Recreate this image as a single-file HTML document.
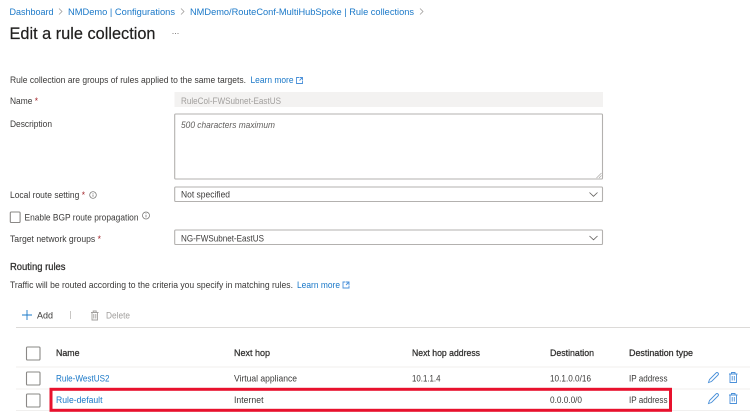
<!DOCTYPE html>
<html lang="en"><head><meta charset="utf-8"><title>Edit a rule collection</title>
<style>
html,body{margin:0;padding:0;background:#fff;width:750px;height:418px;overflow:hidden}
svg{display:block;filter:blur(.35px)}
text{font-family:"Liberation Sans",sans-serif;font-size:9.6px;fill:#3b3a39;white-space:pre}
.l{fill:#1a78c8}
.b{fill:#323130;stroke:#323130;stroke-width:.28}
.box{fill:#fff;stroke:#8a8886;stroke-width:1.1}
.sel{fill:#fff;stroke:#b3b1af;stroke-width:1.1}
.ln{stroke:#f0efee;stroke-width:1}
.ic{fill:none;stroke:#4a90d9;stroke-width:.9}
.gr{fill:none;stroke:#6b6a68;stroke-width:.7}
</style></head><body>
<svg width="750" height="418" viewBox="0 0 750 418" xmlns="http://www.w3.org/2000/svg">
<rect width="750" height="418" fill="#fff"/>

<text class="l" x="9.5" y="14.8" textLength="44" lengthAdjust="spacingAndGlyphs">Dashboard</text>
<path d="M59 8.500l3 3-3 3" fill="none" stroke="#a19f9d" stroke-width=".8"/>
<text class="l" x="68" y="14.8" textLength="107" lengthAdjust="spacingAndGlyphs">NMDemo | Configurations</text>
<path d="M181 8.500l3 3-3 3" fill="none" stroke="#a19f9d" stroke-width=".8"/>
<text class="l" x="190" y="14.800" textLength="224" lengthAdjust="spacingAndGlyphs">NMDemo/RouteConf-MultiHubSpoke | Rule collections</text>
<path d="M420 8.500l3 3-3 3" fill="none" stroke="#a19f9d" stroke-width=".8"/>

<text x="9.500" y="39" textLength="146" lengthAdjust="spacingAndGlyphs" style="font-size:17px;fill:#201f1e;stroke:#201f1e;stroke-width:.2">Edit a rule collection</text>
<circle cx="173" cy="33.500" r=".5" fill="#605e5c"/><circle cx="175.500" cy="33.500" r=".5" fill="#605e5c"/><circle cx="178" cy="33.500" r=".5" fill="#605e5c"/>

<text x="10" y="83" textLength="236" lengthAdjust="spacingAndGlyphs">Rule collection are groups of rules applied to the same targets.</text>
<text class="l" x="250.500" y="83" textLength="43" lengthAdjust="spacingAndGlyphs">Learn more</text>
<path d="M299 77.500h-2.500v6h6V81M299.500 77.500h3v3M302.500 77.500l-3 3" class="ic" stroke-width=".7"/>

<text x="10" y="104" textLength="28" lengthAdjust="spacingAndGlyphs">Name <tspan fill="#a4262c">*</tspan></text>
<rect x="174.500" y="92" width="428.500" height="15" fill="#f3f2f1"/>
<text x="181" y="104" textLength="100" lengthAdjust="spacingAndGlyphs" style="fill:#a19f9d">RuleCol-FWSubnet-EastUS</text>

<text x="10" y="127" textLength="42" lengthAdjust="spacingAndGlyphs">Description</text>
<rect class="sel" x="174.700" y="114" width="427.800" height="65" rx="1"/>
<text x="181" y="128" textLength="94" lengthAdjust="spacingAndGlyphs" style="font-style:italic;fill:#605e5c">500 characters maximum</text>
<path d="M596.500 178l5-5M599 178l2.500-2.500" stroke="#a8a6a4" stroke-width=".7"/>

<text x="10" y="198" textLength="75" lengthAdjust="spacingAndGlyphs">Local route setting <tspan fill="#a4262c">*</tspan></text>
<circle cx="93" cy="195" r="3.300" class="gr"/><path d="M93 194.500v2.300M93 193v.8" class="gr"/>
<rect class="sel" x="174.700" y="187" width="427.800" height="14.500" rx="1"/>
<text x="181" y="197.500" textLength="49" lengthAdjust="spacingAndGlyphs">Not specified</text>
<path d="M589.500 192.500l4 3.800 4-3.800" fill="none" stroke="#605e5c" stroke-width=".8"/>

<rect class="box" x="10.300" y="212" width="9.800" height="10.500" rx="1"/>
<text x="24.500" y="220.500" textLength="114" lengthAdjust="spacingAndGlyphs">Enable BGP route propagation</text>
<circle cx="146" cy="215.500" r="3.500" class="gr"/><path d="M146 215v2.400M146 213.400v.8" class="gr"/>

<text x="10" y="242" textLength="91" lengthAdjust="spacingAndGlyphs">Target network groups <tspan fill="#a4262c">*</tspan></text>
<rect class="sel" x="174.700" y="230" width="427.800" height="14.500" rx="1"/>
<text x="181" y="241.500" textLength="83" lengthAdjust="spacingAndGlyphs">NG-FWSubnet-EastUS</text>
<path d="M589.500 236l4 3.800 4-3.800" fill="none" stroke="#605e5c" stroke-width=".8"/>

<text class="b" x="10" y="270" textLength="55.500" lengthAdjust="spacingAndGlyphs" style="font-size:10px">Routing rules</text>
<text x="10" y="288" textLength="283" lengthAdjust="spacingAndGlyphs">Traffic will be routed according to the criteria you specify in matching rules.</text>
<text class="l" x="297" y="288" textLength="43" lengthAdjust="spacingAndGlyphs">Learn more</text>
<path d="M345.500 282h-2.500v6h6v-2.500M346 282h3v3M349 282l-3 3" class="ic" stroke-width=".7"/>

<path d="M22 315h10M27 310v10" fill="none" stroke="#1a78c8" stroke-width=".9"/>
<text x="37" y="318.500" textLength="16" lengthAdjust="spacingAndGlyphs">Add</text>
<path d="M70.500 311v8" stroke="#c8c6c4" stroke-width="1"/>
<path d="M91 312.500h7.500M92 312.500v7.500h5.500v-7.500M93.200 312.500v-1.500h3v1.500M93.800 314v4.500M95.800 314v4.500" fill="none" stroke="#a19f9d" stroke-width=".9"/>
<text x="106" y="318.500" textLength="24" lengthAdjust="spacingAndGlyphs" style="fill:#a19f9d">Delete</text>
<path d="M16 327.500H750" stroke="#dcdad8" stroke-width="1"/>

<rect class="box" x="26.500" y="347" width="13.500" height="13" rx="1"/>
<text class="b" x="56" y="356" textLength="23.500" lengthAdjust="spacingAndGlyphs">Name</text>
<text class="b" x="234" y="356" textLength="36" lengthAdjust="spacingAndGlyphs">Next hop</text>
<text class="b" x="412" y="356" textLength="68" lengthAdjust="spacingAndGlyphs">Next hop address</text>
<text class="b" x="550" y="356" textLength="44" lengthAdjust="spacingAndGlyphs">Destination</text>
<text class="b" x="629" y="356" textLength="64" lengthAdjust="spacingAndGlyphs">Destination type</text>
<path d="M16 367H750" class="ln"/>

<rect class="box" x="26.500" y="372" width="13.500" height="13" rx="1"/>
<text class="l" x="56" y="381.500" textLength="53.500" lengthAdjust="spacingAndGlyphs">Rule-WestUS2</text>
<text x="234" y="381.500" textLength="63" lengthAdjust="spacingAndGlyphs">Virtual appliance</text>
<text x="412" y="381.500" textLength="28.500" lengthAdjust="spacingAndGlyphs">10.1.1.4</text>
<text x="550" y="381.500" textLength="41" lengthAdjust="spacingAndGlyphs">10.1.0.0/16</text>
<text x="629" y="381.500" textLength="38.500" lengthAdjust="spacingAndGlyphs">IP address</text>
<path d="M708.500 382.500l1-3 6.500-6.500a1.300 1.300 0 0 1 2 2l-6.500 6.500z" class="ic"/>
<path d="M729 374h8.500M730 374v8.500h6.500V374M731.500 374v-1.500h3.500v1.500M732.200 376v4.500M734.300 376v4.500" class="ic"/>
<path d="M16 389H750" class="ln"/>

<rect class="box" x="26.500" y="394" width="13.500" height="13" rx="1"/>
<text class="l" x="56" y="403" textLength="46.500" lengthAdjust="spacingAndGlyphs">Rule-default</text>
<text x="234" y="403" textLength="29.500" lengthAdjust="spacingAndGlyphs">Internet</text>
<text x="550" y="403" textLength="32" lengthAdjust="spacingAndGlyphs">0.0.0.0/0</text>
<text x="629" y="403" textLength="38.500" lengthAdjust="spacingAndGlyphs">IP address</text>
<path d="M708.500 403.500l1-3 6.500-6.500a1.300 1.300 0 0 1 2 2l-6.500 6.500z" class="ic"/>
<path d="M729 395h8.500M730 395v8.500h6.500V395M731.500 395v-1.500h3.500v1.500M732.200 397v4.500M734.300 397v4.500" class="ic"/>
<path d="M16 410.500H750" class="ln"/>

<rect x="51" y="389.300" width="619.500" height="21" fill="none" stroke="#e8112d" stroke-width="3"/>
</svg>
</body></html>
